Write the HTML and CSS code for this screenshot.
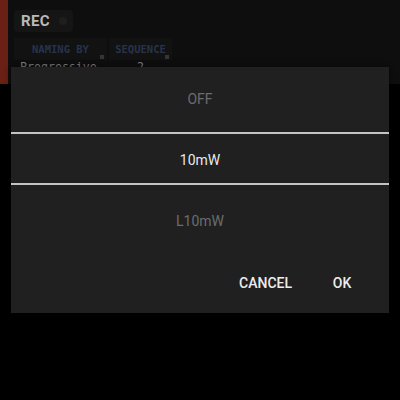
FILE: index.html
```html
<!DOCTYPE html>
<html lang="en">
  <head>
    <meta charset="UTF-8" />
    <meta name="viewport" content="width=device-width, initial-scale=1.0" />
    <title>Power</title>
    <link rel="stylesheet" href="styles.css">
  </head>
  <body>
    <div class="screen">
      <div class="rec">
        <span class="rec-text">REC</span>
        <span class="rec-dot"></span>
      </div>

      <div class="fields">
        <div class="field naming">
          <div class="field-label">NAMING BY<span class="grip"></span></div>
          <div class="field-value">Progressive</div>
        </div>
        <div class="field sequence">
          <div class="field-label">SEQUENCE<span class="grip"></span></div>
          <div class="field-value">2</div>
        </div>
      </div>
    </div>

    <div class="dialog">
      <div class="picker">
        <div class="item item-top">OFF</div>
        <div class="divider"></div>
        <div class="item item-selected">10mW</div>
        <div class="divider"></div>
        <div class="item item-bottom">L10mW</div>
      </div>

      <div class="actions">
        <button class="btn">CANCEL</button>
        <button class="btn">OK</button>
      </div>
    </div>
  </body>
</html>
```

FILE: styles.css
```css
* {
  box-sizing: border-box;
  margin: 0;
  padding: 0;
}

body {
  background: #000;
  font-family: Roboto, "Noto Sans", "Liberation Sans", sans-serif;
  width: 400px;
  height: 400px;
  position: relative;
  overflow: hidden;
}

.screen {
  height: 84px;
  background: #0e0e0e;
  border-left: 8px solid #6a2014;
  padding: 10px 0 0 6px;
}

.rec {
  display: inline-flex;
  align-items: center;
  gap: 9px;
  height: 22px;
  padding: 0 6px 0 7px;
  background: #151515;
  border-radius: 4px;
}

.rec-text {
  font-size: 15px;
  font-weight: bold;
  color: #b9b9b9;
  letter-spacing: 0.3px;
}

.rec-dot {
  width: 8px;
  height: 8px;
  border-radius: 50%;
  background: #1e1e1e;
}

.fields {
  display: flex;
  gap: 2px;
  margin-top: 6px;
  font-family: "DejaVu Sans Mono", "Liberation Mono", monospace;
}

.field-label {
  position: relative;
  height: 22px;
  line-height: 22px;
  background: #121212;
  color: #28324c;
  font-size: 10.5px;
  font-weight: bold;
  text-align: center;
}

.naming .field-label {
  width: 93px;
}

.sequence .field-label {
  width: 63px;
}

.grip {
  position: absolute;
  right: 3px;
  bottom: 1px;
  width: 4px;
  height: 4px;
  background: #353535;
}

.field-value {
  color: #7c7c7c;
  font-size: 11.6px;
  line-height: 14px;
}

.naming .field-value {
  padding-left: 6px;
}

.sequence .field-value {
  text-align: center;
}

.dialog {
  position: absolute;
  left: 11px;
  top: 67px;
  width: 378px;
  height: 246px;
  background: #202020;
  box-shadow: 0 0 6px rgba(0, 0, 0, 0.6);
}

.picker {
  padding-top: 2px;
  font-size: 14px;
  text-align: center;
}

.item {
  color: #6c6c6c;
}

.item-top {
  height: 63px;
  line-height: 61px;
}

.item-selected {
  height: 49px;
  line-height: 53px;
  color: #e8e8e8;
}

.item-bottom {
  height: 67px;
  line-height: 73px;
}

.divider {
  height: 2px;
  background: #c4c4c4;
}

.actions {
  display: flex;
  justify-content: flex-end;
  gap: 10px;
  padding: 13px 15px 12px;
}

.btn {
  min-width: 64px;
  height: 36px;
  padding: 0 8px;
  border: none;
  background: none;
  color: #ededed;
  font-family: Roboto, "Noto Sans", sans-serif;
  font-size: 14px;
  font-weight: 500;
}
```
